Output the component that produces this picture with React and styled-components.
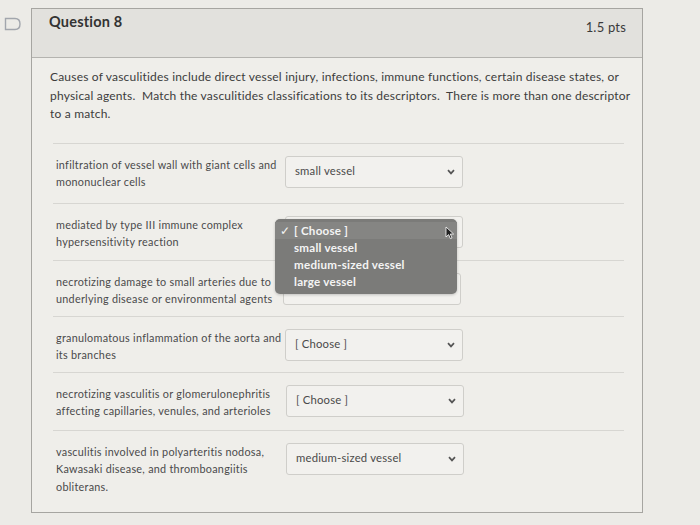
import React from 'react';
import styled, { createGlobalStyle } from 'styled-components';

const Global = createGlobalStyle`
  body {
    margin: 0;
    background: #ecebe7;
    font-family: Lato, "Open Sans", sans-serif;
  }
`;

const Page = styled.div`
  display: flex;
  padding-top: 8px;
  width: 700px;
  height: 525px;
  box-sizing: border-box;
`;

const Gutter = styled.div`
  width: 31px;
  flex-shrink: 0;
  padding: 7px 0 0 4px;
  box-sizing: border-box;
`;

const Card = styled.div`
  width: 612px;
  height: 505px;
  border: 1px solid #a6a5a1;
  background: #efeeea;
  box-sizing: border-box;
`;

const Header = styled.div`
  height: 49px;
  background: #e2e1dd;
  border-bottom: 1px solid #b4b3af;
  display: flex;
  justify-content: space-between;
  align-items: flex-start;
  padding: 0 16px 0 17px;
  box-sizing: border-box;
`;

const Title = styled.h2`
  margin: 0;
  padding-top: 4px;
  font-size: 14.5px;
  font-weight: 700;
  letter-spacing: 0.2px;
  color: #333;
`;

const Points = styled.span`
  padding-top: 10px;
  font-size: 13px;
  letter-spacing: 0.2px;
  color: #3a3a3a;
`;

const Body = styled.div`
  padding: 10px 14px 0 18px;
`;

const Intro = styled.p`
  margin: 0 0 19px;
  font-size: 12px;
  letter-spacing: 0.19px;
  line-height: 18.5px;
  color: #3c3c3c;
  white-space: nowrap;
`;

const List = styled.div`
  margin: 0 4px 0 3px;
`;

const Row = styled.div`
  display: flex;
  align-items: flex-start;
  border-top: 1px solid #d7d6d2;
  min-height: ${p => p.h || 56}px;
  padding-top: 12px;
  box-sizing: border-box;
`;

const Label = styled.div`
  width: 229px;
  flex-shrink: 0;
  padding: 0 0 0 3px;
  font-size: 10.8px;
  letter-spacing: 0.28px;
  line-height: 17.5px;
  color: #4a4a4a;
  white-space: nowrap;
`;

const SelectWrap = styled.div`
  position: relative;
  margin-left: ${p => p.shift || 0}px;
`;

const Select = styled.div`
  width: 178px;
  height: 32px;
  border: 1px solid #cfceca;
  border-radius: 3px;
  background: #f2f1ee;
  display: flex;
  align-items: center;
  justify-content: space-between;
  padding: 0 7px 0 9px;
  box-sizing: border-box;
  font-size: 11.3px;
  letter-spacing: 0.2px;
  color: #4a4a4a;
`;

const SelectText = styled.span`
  margin-top: -3px;
`;

const Menu = styled.div`
  position: absolute;
  left: -10px;
  top: 3px;
  width: 182px;
  height: 75px;
  background: #7b7b79;
  border-radius: 5px;
  padding-top: 3px;
  box-sizing: border-box;
  box-shadow: 0 1px 3px rgba(0, 0, 0, 0.2);
  z-index: 5;
`;

const Item = styled.div`
  height: 17px;
  line-height: 17px;
  padding-left: 19px;
  font-size: 11.6px;
  font-weight: 700;
  letter-spacing: 0.25px;
  color: #f4f4f4;
  position: relative;
  background: ${p => (p.active ? '#858583' : 'transparent')};
`;

const Check = styled.span`
  position: absolute;
  left: 5px;
  font-weight: 400;
`;

const Cursor = styled.svg`
  position: absolute;
  right: 2px;
  top: 4px;
`;

const Chevron = () => (
  <svg width="8" height="6" viewBox="0 0 8 6">
    <path d="M1 1.2 L4 4.4 L7 1.2" fill="none" stroke="#555" strokeWidth="1.7" />
  </svg>
);

const FlagIcon = () => (
  <svg width="18" height="14" viewBox="0 0 18 14">
    <path
      d="M1.5 1.5 H11 Q16 1.5 16 7 Q16 12.5 11 12.5 H1.5 Z"
      fill="none"
      stroke="#a2a6ad"
      strokeWidth="1.4"
    />
  </svg>
);

const rows = [
  { lines: ['infiltration of vessel wall with giant cells and', 'mononuclear cells'], value: 'small vessel', h: 60 },
  { lines: ['mediated by type III immune complex', 'hypersensitivity reaction'], value: '[ Choose ]', open: true, h: 57 },
  { lines: ['necrotizing damage to small arteries due to', 'underlying disease or environmental agents'], value: '', h: 56, shift: -2 },
  { lines: ['granulomatous inflammation of the aorta and', 'its branches'], value: '[ Choose ]', h: 56 },
  { lines: ['necrotizing vasculitis or glomerulonephritis', 'affecting capillaries, venules, and arterioles'], value: '[ Choose ]', h: 58, shift: 1 },
  { lines: ['vasculitis involved in polyarteritis nodosa,', 'Kawasaki disease, and thromboangiitis', 'obliterans.'], value: 'medium-sized vessel', h: 70, shift: 1 },
];

const options = ['small vessel', 'medium-sized vessel', 'large vessel'];

export default function App() {
  return (
    <>
      <Global />
      <Page>
        <Gutter>
          <FlagIcon />
        </Gutter>
        <Card>
          <Header>
            <Title>Question 8</Title>
            <Points>1.5 pts</Points>
          </Header>
          <Body>
            <Intro>
              Causes of vasculitides include direct vessel injury, infections, immune functions, certain disease states, or
              <br />
              physical agents.&nbsp; Match the vasculitides classifications to its descriptors.&nbsp; There is more than one descriptor
              <br />
              to a match.
            </Intro>
            <List>
              {rows.map((r, i) => (
                <Row key={i} h={r.h}>
                  <Label>
                    {r.lines.map((l, j) => (
                      <div key={j}>{l}</div>
                    ))}
                  </Label>
                  <SelectWrap shift={r.shift}>
                    <Select>
                      <SelectText>{r.value}</SelectText>
                      <Chevron />
                    </Select>
                    {r.open && (
                      <Menu>
                        <Item active>
                          <Check>✓</Check>[ Choose ]
                          <Cursor width="10" height="14" viewBox="0 0 10 14">
                            <path d="M1 1 L1 11 L3.6 8.6 L5.4 12.6 L7 11.9 L5.3 8 L8.6 8 Z" fill="#222" stroke="#fff" strokeWidth="0.8" />
                          </Cursor>
                        </Item>
                        {options.map(o => (
                          <Item key={o}>{o}</Item>
                        ))}
                      </Menu>
                    )}
                  </SelectWrap>
                </Row>
              ))}
            </List>
          </Body>
        </Card>
      </Page>
    </>
  );
}
